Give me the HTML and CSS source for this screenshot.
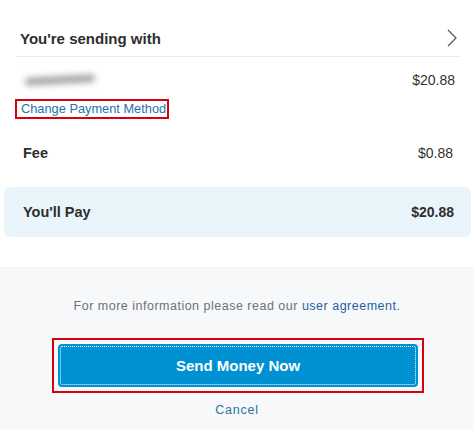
FILE: index.html
```html
<!DOCTYPE html>
<html lang="en">
<head>
    <meta charset="UTF-8">
    <meta name="viewport" content="width=device-width, initial-scale=1.0">
    <title>Review payment</title>
    <link rel="stylesheet" href="styles.css">
</head>
<body>
    <div class="summary">
        <!-- Payment source -->
        <div class="head">
            <span class="head-title">You're sending with</span>
            <svg class="chevron" width="10" height="18" viewBox="0 0 10 18">
                <polyline points="1,1 9,9 1,17" fill="none" stroke="#555" stroke-width="1.2"/>
            </svg>
        </div>

        <div class="row method">
            <span class="masked"></span>
            <span class="amount">$20.88</span>
        </div>
        <a href="#" class="change-link">Change Payment Method</a>

        <div class="row fee">
            <span class="label">Fee</span>
            <span class="amount">$0.88</span>
        </div>

        <div class="total">
            <span class="label">You'll Pay</span>
            <span class="amount strong">$20.88</span>
        </div>
    </div>

    <div class="footer">
        <p class="info">For more information please read our <a href="#">user agreement</a>.</p>
        <div class="highlight">
            <button class="send-btn">Send Money Now</button>
        </div>
        <a href="#" class="cancel">Cancel</a>
    </div>
</body>
</html>
```

FILE: styles.css
```css
body {
    font-family: "Liberation Sans", Arial, sans-serif;
    margin: 0;
    background-color: #fff;
    color: #2c2e2f;
}

.summary {
    padding: 0 3px 30px 4px;
}

.head {
    display: flex;
    justify-content: space-between;
    align-items: center;
    height: 36px;
    margin: 20px 11px 0 12px;
    padding: 0 3px 0 4px;
    border-bottom: 1px solid #e9eaeb;
}

.head-title {
    font-size: 15px;
    font-weight: bold;
}

.chevron {
    display: block;
}

.row {
    display: flex;
    justify-content: space-between;
    align-items: center;
    line-height: 18px;
    padding: 0 18px 0 19px;
}

.method {
    margin-top: 14px;
    padding-left: 16px;
    padding-right: 16px;
}

.masked {
    display: inline-block;
    width: 70px;
    height: 8px;
    margin-left: 5px;
    background: #a5a5a5;
    border-radius: 4px;
    filter: blur(3px);
    transform: rotate(-3deg);
}

.amount {
    font-size: 14px;
    color: #333;
}

.change-link {
    display: inline-block;
    margin: 10px 0 0 11px;
    padding: 0 1px 0 4px;
    border: 2px solid #d7000f;
    font-size: 12.8px;
    line-height: 16px;
    color: #1f74a8;
    text-decoration: none;
}

.fee {
    margin-top: 25px;
}

.label {
    font-size: 14.5px;
    font-weight: bold;
}

.total {
    display: flex;
    justify-content: space-between;
    align-items: center;
    height: 50px;
    margin-top: 25px;
    padding: 0 17px 0 19px;
    background: #eaf4fb;
    border-radius: 7px;
}

.strong {
    font-weight: bold;
    color: #2c2e2f;
}

.footer {
    background: #f7f8fa;
    border-top: 1px solid #eef0f2;
    padding: 30px 0 12px;
    text-align: center;
}

.info {
    margin: 0;
    font-size: 12.5px;
    line-height: 16px;
    letter-spacing: 0.5px;
    color: #6c7378;
}

.info a {
    color: #1f63a0;
    text-decoration: none;
}

.highlight {
    width: 360px;
    margin: 24px auto 0;
    padding: 4px;
    border: 2px solid #d7000f;
    position: relative;
    left: 1px;
}

.send-btn {
    display: block;
    width: 100%;
    height: 43px;
    border: none;
    border-radius: 4px;
    background: #0091d2;
    color: #fff;
    font-family: inherit;
    font-size: 15px;
    font-weight: bold;
    outline: 1px dotted #fff;
    outline-offset: -3px;
    cursor: pointer;
}

.cancel {
    display: inline-block;
    margin-top: 9px;
    font-size: 12.5px;
    line-height: 16px;
    letter-spacing: 0.8px;
    color: #2a74a5;
    text-decoration: none;
}
```
